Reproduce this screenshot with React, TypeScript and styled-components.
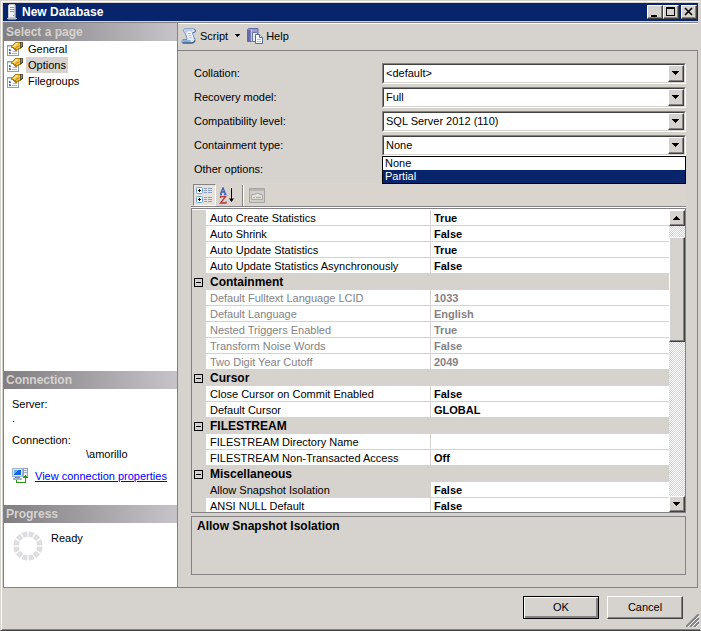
import React from "react";
import styled, { createGlobalStyle, css } from "styled-components";

const face = "#d6d3ce";
const shadow = "#848284";
const dark = "#424142";
const navy = "#08246b";

const GlobalStyle = createGlobalStyle`
  *, *::before, *::after { box-sizing: border-box; }
  html, body { margin: 0; background: ${face}; }
  body, button, select {
    font-family: "Liberation Sans", Arial, sans-serif;
    font-size: 11px;
    line-height: 16px;
    color: #000;
  }
  button { padding: 0; border: 0; background: none; }
`;

const raised = css`
  background: ${face};
  border: 1px solid;
  border-color: #fff ${dark} ${dark} #fff;
  box-shadow: inset -1px -1px 0 ${shadow};
`;

const Window = styled.div`
  display: flex;
  flex-direction: column;
  height: 100vh;
  min-height: 480px;
  padding: 2px 2px 0;
  border: 1px solid;
  border-color: ${face} ${face} ${dark} ${face};
  box-shadow: inset 1px 1px 0 #fff, inset 0 -1px 0 ${shadow};
  position: relative;
`;

const TitleBar = styled.header`
  display: flex;
  align-items: center;
  gap: 3px;
  height: 18px;
  flex: none;
  padding: 0 1px 0 4px;
  background: ${navy};
`;

const Title = styled.h1`
  flex: 1;
  margin: 0;
  font-size: 12px;
  line-height: 18px;
  color: #fff;
`;

const CaptionButtons = styled.div`
  display: flex;
`;

const CaptionButton = styled.button<{ $apart?: boolean }>`
  ${raised}
  display: flex;
  width: 16px;
  height: 14px;
  margin-left: ${(p) => (p.$apart ? 2 : 0)}px;
`;

const Body = styled.div`
  display: flex;
  flex: 1;
  min-height: 0;
  margin-top: 1px;
  border-top: 1px solid ${shadow};
  border-bottom: 1px solid ${shadow};
`;

const Sidebar = styled.aside`
  display: flex;
  flex-direction: column;
  width: 175px;
  flex: none;
  background: #fff;
  border-left: 1px solid ${shadow};
  border-right: 1px solid ${shadow};
`;

const PanelTitle = styled.h2`
  height: 18px;
  margin: 0;
  padding-left: 2px;
  font-size: 12px;
  line-height: 18px;
  color: ${face};
  background: linear-gradient(90deg, #807e81, #c6c4c8);
`;

const PageList = styled.nav`
  display: flex;
  flex-direction: column;
  align-items: flex-start;
  flex: 1;
`;

const PageLink = styled.button<{ $selected?: boolean }>`
  display: flex;
  gap: 3px;
  height: 16px;
  padding-left: 3px;
  span {
    padding: 0 2px;
    background: ${(p) => (p.$selected ? face : "transparent")};
  }
`;

const ConnectionInfo = styled.div`
  height: 116px;
  padding: 7px 8px 0;
`;

const Term = styled.div`
  line-height: 16px;
`;

const Detail = styled.div<{ $indent?: boolean }>`
  line-height: 12px;
  padding-left: ${(p) => (p.$indent ? 74 : 0)}px;
  margin-bottom: 8px;
`;

const LinkRow = styled.div`
  display: flex;
  gap: 7px;
  a { color: #00f; }
`;

const ProgressInfo = styled.div`
  display: flex;
  gap: 7px;
  height: 64px;
  padding: 7px 8px 0;
`;

const Main = styled.main`
  display: flex;
  flex-direction: column;
  flex: 1;
  min-width: 0;
  border-top: 1px solid #fff;
`;

const Toolbar = styled.div`
  display: flex;
  align-items: center;
  height: 26px;
  flex: none;
  padding: 0 0 3px 3px;
`;

const ToolButton = styled.button`
  display: flex;
  align-items: center;
  gap: 3px;
  height: 22px;
`;

const MenuArrow = styled.button`
  display: flex;
  margin: 0 7px;
`;

const Content = styled.div`
  display: flex;
  flex-direction: column;
  flex: 1;
  min-height: 0;
  padding: 10px 11px 12px 13px;
  border-top: 1px solid ${shadow};
  border-right: 1px solid ${shadow};
`;

const Field = styled.div`
  display: grid;
  grid-template-columns: 188px 1fr;
  align-items: center;
  height: 24px;
  padding-left: 3px;
  flex: none;
`;

const SelectBox = styled.div`
  position: relative;
  height: 21px;
  border: 1px solid;
  border-color: ${shadow} #fff #fff ${shadow};
  background: #fff;
`;

const Select = styled.select`
  display: block;
  width: 100%;
  height: 19px;
  padding: 0 20px 0 2px;
  border: 1px solid;
  border-color: ${dark} ${face} ${face} ${dark};
  border-radius: 0;
  background: #fff;
  appearance: none;
  outline: none;
`;

const SelectArrow = styled.span`
  ${raised}
  position: absolute;
  top: 1px;
  right: 1px;
  display: flex;
  align-items: center;
  justify-content: center;
  width: 16px;
  height: 17px;
  pointer-events: none;
`;

const Options = styled.ul`
  position: absolute;
  z-index: 1;
  top: 20px;
  left: -1px;
  right: -1px;
  margin: 0;
  padding: 0;
  list-style: none;
  border: 1px solid #000;
  background: #fff;
`;

const Option = styled.li<{ $active?: boolean }>`
  height: 13px;
  padding-left: 2px;
  line-height: 13px;
  color: ${(p) => (p.$active ? "#fff" : "#000")};
  background: ${(p) => (p.$active ? navy : "#fff")};
`;

const GridToolbar = styled.div`
  display: flex;
  align-items: center;
  height: 25px;
  flex: none;
  margin-top: 2px;
  padding-left: 2px;
  background: #dad4cf;
  border-bottom: 1px solid #fff;
  box-shadow: inset 0 -1px 0 ${shadow};
`;

const GridTool = styled.button<{ $pressed?: boolean }>`
  display: flex;
  align-items: center;
  justify-content: center;
  width: 23px;
  height: 22px;
  border: 1px solid transparent;
  ${(p) =>
    p.$pressed &&
    css`
      border-color: ${shadow} #fff #fff ${shadow};
      background: #e6e2de;
    `}
`;

const Divider = styled.span`
  width: 2px;
  height: 21px;
  margin: 0 1px 0 3px;
  border-left: 1px solid ${shadow};
  border-right: 1px solid #fff;
`;

const GridFrame = styled.div`
  display: flex;
  flex: 1;
  min-height: 0;
  padding-top: 1px;
  border: 1px solid ${shadow};
  background: #fff;
`;

const GridView = styled.div`
  flex: 1;
  overflow: hidden;
`;

const Table = styled.table`
  width: 100%;
  table-layout: fixed;
  border-collapse: separate;
  border-spacing: 0;
`;

const GutterCol = styled.col`
  width: 14px;
`;
const NameCol = styled.col`
  width: 225px;
`;

const cell = css`
  height: 16px;
  padding: 0 4px;
  line-height: 16px;
  text-align: left;
  white-space: nowrap;
  overflow: hidden;
  box-shadow: inset 0 -1px 0 ${face};
`;

const Gutter = styled.td`
  ${cell}
  padding: 0 0 0 2px;
  background: ${face};
`;

const NameCell = styled.th<{ $muted?: boolean; $selected?: boolean }>`
  ${cell}
  font-weight: 400;
  color: ${(p) => (p.$muted ? shadow : "#000")};
  background: ${(p) => (p.$selected ? face : "#fff")};
  border-right: 1px solid ${face};
`;

const ValueCell = styled.td<{ $muted?: boolean }>`
  ${cell}
  padding-left: 3px;
  font-weight: 700;
  color: ${(p) => (p.$muted ? shadow : "#000")};
`;

const GroupCell = styled.th`
  ${cell}
  font-size: 12px;
  background: ${face};
`;

const Toggle = styled.button`
  display: flex;
`;

const ScrollBar = styled.div`
  display: flex;
  flex-direction: column;
  width: 16px;
  flex: none;
  background: repeating-conic-gradient(#fff 0 25%, ${face} 0 50%) 0 0 / 2px 2px;
`;

const ScrollButton = styled.button`
  ${raised}
  display: flex;
  align-items: center;
  justify-content: center;
  height: 16px;
  flex: none;
`;

const ScrollTrack = styled.div`
  flex: 1;
  padding-top: 11px;
`;

const ScrollThumb = styled.div`
  ${raised}
  height: 105px;
`;

const Description = styled.section`
  height: 59px;
  flex: none;
  margin-top: 3px;
  padding: 1px 5px;
  border: 1px solid ${shadow};
  font-size: 12px;
  font-weight: 700;
`;

const Footer = styled.footer`
  display: flex;
  justify-content: flex-end;
  gap: 8px;
  height: 42px;
  flex: none;
  padding: 8px 15px 0;
`;

const DialogButton = styled.button<{ $default?: boolean }>`
  ${raised}
  width: 76px;
  height: 23px;
  padding-bottom: 2px;
  ${(p) =>
    p.$default &&
    css`
      border-color: #000;
      box-shadow: inset 1px 1px 0 #fff, inset -1px -1px 0 ${shadow}, inset -2px -2px 0 ${shadow};
    `}
`;

const Grip = styled.svg`
  position: absolute;
  right: 1px;
  bottom: 3px;
`;

const Arrow = ({ up }: { up?: boolean }) => (
  <svg width="8" height="4" viewBox="0 0 8 4" shapeRendering="crispEdges" aria-hidden="true">
    <path d={up ? "M3 0h1v1h1v1h1v1h1v1H0V3h1V2h1V1h1z" : "M0 0h7v1H6v1H5v1H4v1H3V3H2V2H1V1H0z"} />
  </svg>
);

const ServerIcon = () => (
  <svg width="12" height="16" viewBox="0 0 12 16" shapeRendering="crispEdges" aria-hidden="true">
    <path d="M2 0h6v1h1v13H1V1h1z" fill="#c3ccd6" />
    <path d="M2 1h5v12H2z" fill="#edf2f6" />
    <path d="M8 1h1v13H8z" fill="#8a97a6" />
    <path d="M3 3h4v1H3zM3 5h4v1H3zM3 7h4v1H3z" fill="#8397ae" />
    <path d="M3 2h4v1H3zM3 4h4v1H3zM3 6h4v1H3z" fill="#fff" />
    <path d="M6 11h1v1H6z" fill="#4fb83c" />
    <path d="M0 14h10v1H0z" fill="#b4bdc6" />
    <path d="M1 15h8v1H1z" fill="#6f7c8b" />
  </svg>
);

const PageIcon = () => (
  <svg width="16" height="16" viewBox="0 0 16 16" shapeRendering="crispEdges" aria-hidden="true">
    <path d="M0 4h12v11H0z" fill="#8c9cbd" />
    <path d="M1 5h10v9H1z" fill="#fff" />
    <path d="M1 5h6v1H1z" fill="#c2cfe6" />
    <path d="M2 8h2v2H2zM2 11h2v2H2z" fill="#4a69a8" />
    <path d="M3 8h1v1H3zM3 11h1v1H3z" fill="#8fa8da" />
    <path d="M6 10h4v1H6zM5 12h5v1H5z" fill="#b3afbd" />
    <path d="M8 1h5v1h1v6h-2v1h-2v1H8V9H7V8H6V7H4V5h1V4h1V3h1V2h1z" fill="#b07a14" />
    <path d="M8 2h5v5h-2v1H9V7H7V6H5V5h1V4h1V3h1z" fill="#f2bd31" />
    <path d="M9 2h2v1H9zM8 3h2v1H8zM7 4h2v1H7zM6 5h2v1H6z" fill="#ffe792" />
    <path d="M10 5h2v1h-2zM9 6h1v1H9z" fill="#c98f1c" />
    <path d="M13 1h3v5h-1v1h-2z" fill="#58553c" />
    <path d="M14 2h1v3h-1z" fill="#8d937c" />
  </svg>
);

const ScriptIcon = () => (
  <svg width="16" height="16" viewBox="0 0 16 16" aria-hidden="true">
    <path d="M4 .8h8.500c2.500 0 2.700 3.700.5 3.700h-1.500c0 2 1.500 3.500 1.500 6h1v2.500c-.5 1.500-1.500 2.200-3 2.200H2C.5 15 .3 12 2 11.500h4C6 9 4.500 7 4 4.500 2 4 2 1 4 .8z" fill="#dce9fa" stroke="#6a86b4" strokeWidth=".9" />
    <path d="M4 1.500h8.500c-1.500.5-1.500 1.500-1.500 2.500H4C3 3.500 3 2 4 1.500z" fill="#b5cdef" />
    <path d="M6 3.500h4.500c0 2 1.500 4 1.500 7H7.500c0-3-1.500-4-1.500-7z" fill="#f5faff" />
    <path d="M7 5.500h3M7.500 7.500h3M8 9.500h3" stroke="#a4bfe6" />
    <path d="M2 12h7.500c0 1.500.5 2.500 1.500 3H2C1 14.500 1 12.500 2 12z" fill="#8faddb" />
    <path d="M1.500 14.800h9.500c1.500-.3 2.500-1 3-2.300" stroke="#3f5480" strokeWidth="1.200" fill="none" />
    <path d="M12.500 4.500c2 0 2-2 1.300-3" stroke="#4a6394" fill="none" />
  </svg>
);

const HelpIcon = () => (
  <svg width="16" height="16" viewBox="0 0 16 16" aria-hidden="true">
    <path d="M.5 1.500L1.500.5H11v13H.5z" fill="#9a9bcf" stroke="#6668a3" />
    <path d="M1 2h2.500v11.500H1z" fill="#666aa9" />
    <path d="M4.500 1v12.500" stroke="#bfc0e2" />
    <path d="M5.500 4.500h4l2 2v7h-6z" fill="#e7edfa" stroke="#6377a4" />
    <path d="M8.500 6.500h4l3 3v6h-7z" fill="#fff" stroke="#526a99" />
    <path d="M12.500 6.500v3h3" fill="#cfdcf1" stroke="#526a99" />
    <path d="M10 11.500h4M10 13.500h4" stroke="#a9bde0" />
  </svg>
);

const ConnectionIcon = () => (
  <svg width="16" height="16" viewBox="0 0 16 16" shapeRendering="crispEdges" aria-hidden="true">
    <path d="M0 0h11v9H0z" fill="#9fb2d2" />
    <path d="M1 1h9v7H1z" fill="#dbe6f7" />
    <path d="M2 2h7v5H2z" fill="#1467dc" />
    <path d="M2 2h4v1H5v1H4v1H3v1H2z" fill="#63b1fb" />
    <path d="M3 9h5v1H3z" fill="#7286a6" />
    <path d="M1 10h9v2H1z" fill="#a3b3cc" />
    <path d="M11 0h5v10h-5z" fill="#99a1b3" />
    <path d="M12 1h3v8h-3z" fill="#f2f4f8" />
    <path d="M12 2h3v1h-3zM12 4h3v1h-3z" fill="#a3aec4" />
    <path d="M4 12h1v2h8v-4h-2V9h1V8h1V7h1v1h1v1h1v1h-2v5H4z" fill="#279414" />
  </svg>
);

const Spinner = () => (
  <svg width="32" height="32" viewBox="0 0 32 32" aria-hidden="true">
    {Array.from({ length: 12 }, (_, i) => (
      <path key={i} d="M13 1.500h6l-1 5.500h-4z" fill="#dedde0" transform={`rotate(${i * 30 + 15} 16 16)`} />
    ))}
  </svg>
);

const CategorizedIcon = () => (
  <svg width="17" height="17" viewBox="0 0 17 17" aria-hidden="true">
    {[0, 9].map((y) => (
      <g key={y}>
        <rect x=".5" y={y + 0.5} width="6" height="6" rx="1" fill="#fff" stroke="#6b9fd8" />
        <path d={`M2 ${y + 3.5}h3M3.500 ${y + 2}v3`} stroke="#000" />
        <path d={`M8 ${y + 1.5}h3M8 ${y + 3.5}h3M8 ${y + 5.5}h3M12 ${y + 1.5}h4M12 ${y + 3.5}h4M12 ${y + 5.5}h4`} stroke="#8d9fb9" />
      </g>
    ))}
  </svg>
);

const SortIcon = () => (
  <svg width="17" height="17" viewBox="0 0 17 17" fill="none" aria-hidden="true">
    <path d="M1 7.500h2M5 7.500h2.500M1.500 7L4 .8 6.500 7M2.500 5h3" stroke="#3b62b4" strokeWidth="1.300" />
    <path d="M1.500 11V9.700h5L1.500 16H7v-1.500" stroke="#b13a3a" strokeWidth="1.300" />
    <path d="M12.500 1v13" stroke="#000" />
    <path d="M10 11.500h5L12.500 15z" fill="#000" />
  </svg>
);

const PagesIcon = () => (
  <svg width="16" height="15" viewBox="0 0 16 15" fill="none" aria-hidden="true">
    <path d="M.5.5h15v14H.5z" fill="#d2cfcb" stroke="#a7a5a3" />
    <path d="M1 1h14v2H1z" fill="#b7b5b2" />
    <path d="M2.500 6.500h4v-1h4v1h3v5h-11z" fill="#e4e1dd" stroke="#aaa8a5" />
    <path d="M4 9.500h2M7 9.500h5" stroke="#a7a5a3" />
  </svg>
);

const Minus = () => (
  <svg width="9" height="9" viewBox="0 0 9 9" shapeRendering="crispEdges" aria-hidden="true">
    <path d="M.5.5h8v8h-8zM2 4.500h5" fill="none" stroke="#000" />
  </svg>
);

type Item = { name: string; value?: string; group?: boolean; muted?: boolean; selected?: boolean };

const items: Item[] = [
  { name: "Auto Create Statistics", value: "True" },
  { name: "Auto Shrink", value: "False" },
  { name: "Auto Update Statistics", value: "True" },
  { name: "Auto Update Statistics Asynchronously", value: "False" },
  { name: "Containment", group: true },
  { name: "Default Fulltext Language LCID", value: "1033", muted: true },
  { name: "Default Language", value: "English", muted: true },
  { name: "Nested Triggers Enabled", value: "True", muted: true },
  { name: "Transform Noise Words", value: "False", muted: true },
  { name: "Two Digit Year Cutoff", value: "2049", muted: true },
  { name: "Cursor", group: true },
  { name: "Close Cursor on Commit Enabled", value: "False" },
  { name: "Default Cursor", value: "GLOBAL" },
  { name: "FILESTREAM", group: true },
  { name: "FILESTREAM Directory Name", value: "" },
  { name: "FILESTREAM Non-Transacted Access", value: "Off" },
  { name: "Miscellaneous", group: true },
  { name: "Allow Snapshot Isolation", value: "False", selected: true },
  { name: "ANSI NULL Default", value: "False" },
];

const fields = [
  { id: "collation", label: "Collation:", value: "<default>" },
  { id: "recovery", label: "Recovery model:", value: "Full" },
  { id: "compatibility", label: "Compatibility level:", value: "SQL Server 2012 (110)" },
  { id: "containment", label: "Containment type:", value: "None", open: ["None", "Partial"] },
];

export default function App() {
  return (
    <>
      <GlobalStyle />
      <Window>
        <TitleBar>
          <ServerIcon />
          <Title>New Database</Title>
          <CaptionButtons>
            <CaptionButton aria-label="Minimize">
              <svg width="14" height="12" shapeRendering="crispEdges"><path d="M3 9h6v2H3z" /></svg>
            </CaptionButton>
            <CaptionButton aria-label="Maximize">
              <svg width="14" height="12" shapeRendering="crispEdges"><path d="M2 1h9v9H2zM3 3v6h7V3z" fillRule="evenodd" /></svg>
            </CaptionButton>
            <CaptionButton aria-label="Close" $apart>
              <svg width="14" height="12"><path d="M3 2l7 7M10 2L3 9" stroke="#000" strokeWidth="1.600" /></svg>
            </CaptionButton>
          </CaptionButtons>
        </TitleBar>

        <Body>
          <Sidebar>
            <PanelTitle>Select a page</PanelTitle>
            <PageList>
              {["General", "Options", "Filegroups"].map((page) => (
                <PageLink key={page} $selected={page === "Options"}>
                  <PageIcon />
                  <span>{page}</span>
                </PageLink>
              ))}
            </PageList>
            <PanelTitle>Connection</PanelTitle>
            <ConnectionInfo>
              <Term>Server:</Term>
              <Detail>.</Detail>
              <Term>Connection:</Term>
              <Detail $indent>\amorillo</Detail>
              <LinkRow>
                <ConnectionIcon />
                <a href="#connection">View connection properties</a>
              </LinkRow>
            </ConnectionInfo>
            <PanelTitle>Progress</PanelTitle>
            <ProgressInfo>
              <Spinner />
              <span>Ready</span>
            </ProgressInfo>
          </Sidebar>

          <Main>
            <Toolbar>
              <ToolButton><ScriptIcon />Script</ToolButton>
              <MenuArrow aria-label="Script options">
                <svg width="5" height="3" shapeRendering="crispEdges"><path d="M0 0h5v1H4v1H3v1H2V2H1V1H0z" /></svg>
              </MenuArrow>
              <ToolButton><HelpIcon />Help</ToolButton>
            </Toolbar>
            <Content>
              {fields.map((f) => (
                <Field key={f.id}>
                  <label htmlFor={f.id}>{f.label}</label>
                  <SelectBox>
                    <Select id={f.id} defaultValue={f.value}>
                      {(f.open ?? [f.value]).map((o) => (
                        <option key={o}>{o}</option>
                      ))}
                    </Select>
                    <SelectArrow><Arrow /></SelectArrow>
                    {f.open && (
                      <Options role="listbox" aria-label={f.label}>
                        {f.open.map((o) => (
                          <Option key={o} role="option" aria-selected={o === "Partial"} $active={o === "Partial"}>{o}</Option>
                        ))}
                      </Options>
                    )}
                  </SelectBox>
                </Field>
              ))}
              <Field>Other options:</Field>
              <GridToolbar>
                <GridTool $pressed aria-label="Categorized"><CategorizedIcon /></GridTool>
                <GridTool aria-label="Alphabetical"><SortIcon /></GridTool>
                <Divider />
                <GridTool aria-label="Property pages" disabled><PagesIcon /></GridTool>
              </GridToolbar>
              <GridFrame>
                <GridView>
                  <Table>
                    <colgroup><GutterCol /><NameCol /><col /></colgroup>
                    <tbody>
                      {items.map((it) => (
                        <tr key={it.name}>
                          <Gutter>
                            {it.group && <Toggle aria-label={`Collapse ${it.name}`}><Minus /></Toggle>}
                          </Gutter>
                          {it.group ? (
                            <GroupCell colSpan={2}>{it.name}</GroupCell>
                          ) : (
                            <>
                              <NameCell scope="row" $muted={it.muted} $selected={it.selected}>{it.name}</NameCell>
                              <ValueCell $muted={it.muted}>{it.value}</ValueCell>
                            </>
                          )}
                        </tr>
                      ))}
                    </tbody>
                  </Table>
                </GridView>
                <ScrollBar>
                  <ScrollButton aria-label="Scroll up"><Arrow up /></ScrollButton>
                  <ScrollTrack><ScrollThumb /></ScrollTrack>
                  <ScrollButton aria-label="Scroll down"><Arrow /></ScrollButton>
                </ScrollBar>
              </GridFrame>
              <Description>Allow Snapshot Isolation</Description>
            </Content>
          </Main>
        </Body>

        <Footer>
          <DialogButton $default>OK</DialogButton>
          <DialogButton>Cancel</DialogButton>
        </Footer>
        <Grip width="13" height="13" viewBox="0 0 13 13" aria-hidden="true">
          <path d="M0 13L13 0M4 13l9-9M8 13l5-5" stroke="#848284" strokeWidth="2" />
          <path d="M2 13L13 2M6 13l7-7M10 13l3-3" stroke="#fff" />
        </Grip>
      </Window>
    </>
  );
}
